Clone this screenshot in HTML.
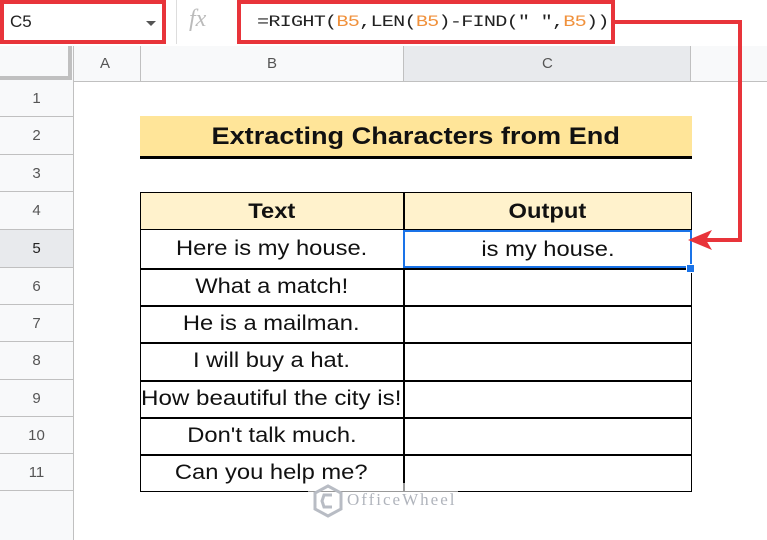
<!DOCTYPE html>
<html><head><style>
body{margin:0;width:767px;height:540px;overflow:hidden;background:#fff;font-family:"Liberation Sans",Arial,sans-serif;position:relative}
.a{position:absolute}
.rh{position:absolute;left:0;width:73px;background:#f8f9fa;border-bottom:1px solid #c0c0c0;color:#555;font-size:15px;text-align:center;box-sizing:border-box}
.cell{position:absolute;box-sizing:border-box;font-size:21px;color:#111;text-align:center;white-space:nowrap}
.cell span{display:inline-block;transform:scaleX(1.13)}
.mono{font-family:"Liberation Mono",monospace}
</style></head><body>
<div class="a" style="left:0;top:0;width:767px;height:46px;background:#fff;border-bottom:1px solid #ccc"></div>
<div class="a" style="left:0;top:0;width:166px;height:44px;border:4px solid #e8343a;box-sizing:border-box"></div>
<div class="a" style="left:10px;top:12px;font-size:17px;color:#222">C5</div>
<div class="a" style="left:146px;top:21px;width:0;height:0;border-left:5px solid transparent;border-right:5px solid transparent;border-top:5px solid #555"></div>
<div class="a" style="left:176px;top:0;width:1px;height:44px;background:#ddd"></div>
<div class="a" style="left:189px;top:6px;font-size:24px;color:#bbb;font-style:italic;font-family:'Liberation Serif',serif">fx</div>
<div class="a" style="left:237px;top:0;width:378px;height:44px;border:4px solid #e8343a;box-sizing:border-box"></div>
<div class="a mono" style="left:257px;top:13px;font-size:16px;color:#222;letter-spacing:-0.6px;transform:scaleX(1.26);transform-origin:left">=RIGHT(<span style="color:#f0913c">B5</span>,LEN(<span style="color:#f0913c">B5</span>)-FIND(" ",<span style="color:#f0913c">B5</span>))</div>
<div class="a" style="left:0;top:46px;width:767px;height:35px;background:#f8f9fa;border-bottom:1px solid #c0c0c0"></div>
<div class="a" style="left:0;top:46px;width:68px;height:30px;border-right:4px solid #c0c0c0;border-bottom:4px solid #c0c0c0;background:#f8f9fa"></div>
<div class="a" style="left:403px;top:46px;width:287px;height:35px;background:#e8eaed"></div>
<div class="a" style="left:73px;top:46px;width:1px;height:494px;background:#c0c0c0"></div>
<div class="a" style="left:140px;top:46px;width:1px;height:35px;background:#c0c0c0"></div>
<div class="a" style="left:403px;top:46px;width:1px;height:35px;background:#c0c0c0"></div>
<div class="a" style="left:690px;top:46px;width:1px;height:35px;background:#c0c0c0"></div>
<div class="a" style="left:100px;top:55px;font-size:15px;color:#555">A</div>
<div class="a" style="left:267px;top:55px;font-size:15px;color:#555">B</div>
<div class="a" style="left:542px;top:55px;font-size:15px;color:#555">C</div>
<div class="rh" style="top:81px;height:36px;line-height:36px">1</div>
<div class="rh" style="top:117px;height:38px;line-height:38px">2</div>
<div class="rh" style="top:155px;height:37px;line-height:37px">3</div>
<div class="rh" style="top:192px;height:38px;line-height:38px">4</div>
<div class="rh" style="top:230px;height:38px;line-height:38px;background:#e8eaed;color:#222">5</div>
<div class="rh" style="top:268px;height:37px;line-height:37px">6</div>
<div class="rh" style="top:305px;height:37px;line-height:37px">7</div>
<div class="rh" style="top:342px;height:38px;line-height:38px">8</div>
<div class="rh" style="top:380px;height:37px;line-height:37px">9</div>
<div class="rh" style="top:417px;height:37px;line-height:37px">10</div>
<div class="rh" style="top:454px;height:37px;line-height:37px">11</div>
<div class="rh" style="top:491px;height:49px;border:none"></div>
<div class="cell" style="left:140px;top:116px;width:552px;height:43px;background:#ffe599;border-bottom:3px solid #000;font-weight:bold;font-size:24px;line-height:42px"><span>Extracting Characters from End</span></div>
<div class="a" style="left:140px;top:192px;width:552px;height:300px;border:1.5px solid #000;box-sizing:border-box"></div>
<div class="cell" style="left:140px;top:192px;width:552px;height:38px;background:#fff2cc;border:1.5px solid #000"></div>
<div class="a" style="left:403px;top:192px;width:1.5px;height:300px;background:#000"></div>
<div class="cell" style="left:140px;top:192px;width:263px;line-height:40px;font-weight:bold"><span>Text</span></div>
<div class="cell" style="left:403px;top:192px;width:288px;line-height:40px;font-weight:bold"><span>Output</span></div>
<div class="a" style="left:140px;top:268px;width:552px;height:1.5px;background:#000"></div>
<div class="a" style="left:140px;top:305px;width:552px;height:1.5px;background:#000"></div>
<div class="a" style="left:140px;top:342px;width:552px;height:1.5px;background:#000"></div>
<div class="a" style="left:140px;top:380px;width:552px;height:1.5px;background:#000"></div>
<div class="a" style="left:140px;top:417px;width:552px;height:1.5px;background:#000"></div>
<div class="a" style="left:140px;top:454px;width:552px;height:1.5px;background:#000"></div>
<div class="cell" style="left:140px;top:230px;width:263px;line-height:38px"><span>Here is my house.</span></div>
<div class="cell" style="left:140px;top:268px;width:263px;line-height:38px"><span>What a match!</span></div>
<div class="cell" style="left:140px;top:305px;width:263px;line-height:38px"><span>He is a mailman.</span></div>
<div class="cell" style="left:140px;top:342px;width:263px;line-height:38px"><span>I will buy a hat.</span></div>
<div class="cell" style="left:140px;top:380px;width:263px;line-height:38px"><span style="transform:scaleX(1.15)">How beautiful the city is!</span></div>
<div class="cell" style="left:140px;top:417px;width:263px;line-height:38px"><span>Don't talk much.</span></div>
<div class="cell" style="left:140px;top:454px;width:263px;line-height:38px"><span>Can you help me?</span></div>
<div class="cell" style="left:403px;top:230px;width:289px;height:38px;border:2px solid #1a73e8;line-height:36px"><span>is my house.</span></div>
<div class="a" style="left:686px;top:264px;width:7px;height:7px;background:#1a73e8;border:1px solid #fff"></div>
<svg class="a" style="left:0;top:0" width="767" height="540">
<polyline points="615,22 740,22 740,240 700,240" fill="none" stroke="#e8343a" stroke-width="4"/>
<polygon points="688,240 712,230 706,240 712,250" fill="#e8343a"/>
</svg>
<div class="a" style="left:308px;top:483px;width:150px;height:36px;background:rgba(255,255,255,0.6)"></div>
<svg class="a" style="left:312px;top:484px" width="32" height="34"><polygon points="16,2 29,9 29,25 16,32 3,25 3,9" fill="none" stroke="#b8bcc4" stroke-width="3"/><path d="M20,11 L12,11 L10,17 L12,23 L20,23" fill="none" stroke="#b8bcc4" stroke-width="3"/></svg>
<div class="a" style="left:347px;top:490px;font-family:'Liberation Serif',serif;font-size:17px;color:#b0b4bc;letter-spacing:2px">OfficeWheel</div>
</body></html>
